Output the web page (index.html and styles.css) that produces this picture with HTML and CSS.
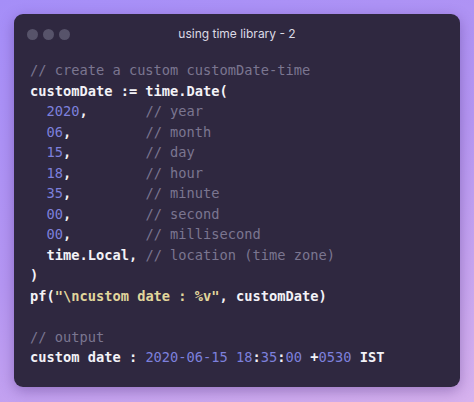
FILE: index.html
```html
<!DOCTYPE html>
<html>
<head>
<meta charset="utf-8">
<link rel="stylesheet" href="styles.css">
</head>
<body>
<div class="window">
  <div class="titlebar">
    <div class="dots"><span class="dot"></span><span class="dot"></span><span class="dot"></span></div>
    <div class="title">using time library - 2</div>
  </div>
<pre class="code"><span class="c">// create a custom customDate-time</span>
<span class="w">customDate := time.Date(</span>
  <span class="n">2020</span><span class="w">,</span>       <span class="c">// year</span>
  <span class="n">06</span><span class="w">,</span>         <span class="c">// month</span>
  <span class="n">15</span><span class="w">,</span>         <span class="c">// day</span>
  <span class="n">18</span><span class="w">,</span>         <span class="c">// hour</span>
  <span class="n">35</span><span class="w">,</span>         <span class="c">// minute</span>
  <span class="n">00</span><span class="w">,</span>         <span class="c">// second</span>
  <span class="n">00</span><span class="w">,</span>         <span class="c">// millisecond</span>
  <span class="w">time.Local,</span> <span class="c">// location (time zone)</span>
<span class="w">)</span>
<span class="w">pf(</span><span class="s">"\ncustom date : %v"</span><span class="w">, customDate)</span>

<span class="c">// output</span>
<span class="w">custom date : </span><span class="n">2020-06-15 18</span><span class="w">:</span><span class="n">35</span><span class="w">:</span><span class="n">00</span> <span class="w">+</span><span class="n">0530</span> <span class="w">IST</span></pre>
</div>
</body>
</html>
```

FILE: styles.css
```css
html, body {
  margin: 0;
  padding: 0;
}
body {
  width: 474px;
  height: 402px;
  overflow: hidden;
  background: linear-gradient(160deg, #a58ef8 0%, #b596f2 50%, #d7b2ee 100%);
  padding: 14px;
  box-sizing: border-box;
}
.window {
  width: 446px;
  height: 373px;
  background: #2f2840;
  border-radius: 9px;
  box-shadow: 0 4px 14px rgba(60, 30, 110, 0.35);
  box-sizing: border-box;
  display: flex;
  flex-direction: column;
}
.titlebar {
  height: 40px;
  display: flex;
  align-items: center;
  position: relative;
  padding-left: 13px;
}
.dots {
  display: flex;
  gap: 5px;
}
.dot {
  width: 11px;
  height: 11px;
  border-radius: 50%;
  background: #57536a;
}
.title {
  position: absolute;
  left: 0;
  right: 0;
  top: 0;
  height: 40px;
  line-height: 40px;
  text-align: center;
  font-family: "Inter", "Liberation Sans", sans-serif;
  font-size: 12px;
  color: #dcdae4;
}
.code {
  margin: 0;
  padding: 6px 16px 0 16px;
  font-family: "DejaVu Sans Mono", "Liberation Mono", monospace;
  font-size: 13.7px;
  line-height: 20.5px;
  color: #f2f1f6;
}
.c {
  color: #7b7690;
}
.w {
  color: #f3f2f7;
  font-weight: bold;
}
.n {
  color: #7d80dc;
}
.s {
  color: #e1d69c;
  font-weight: bold;
}
```
